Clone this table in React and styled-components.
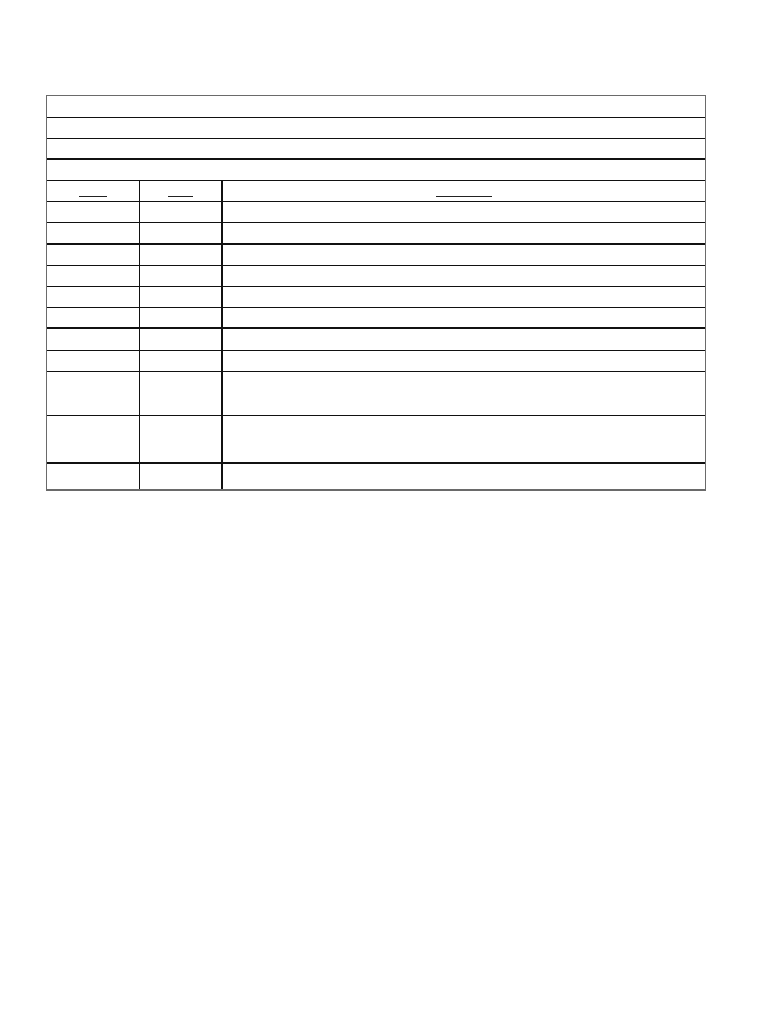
import React from "react";
import styled, { createGlobalStyle } from "styled-components";

const GlobalStyle = createGlobalStyle`
  html, body {
    margin: 0;
    padding: 0;
    background: #ffffff;
  }
  body {
    font-family: "Liberation Sans", Arial, sans-serif;
    font-size: 11px;
    color: #000;
  }
`;

const Page = styled.div`
  width: 768px;
  height: 1024px;
  padding: 95px 0 0 46px;
  box-sizing: border-box;
`;

const Sheet = styled.div`
  width: 660px;
  box-sizing: border-box;
  border: 1.5px solid #6a6a6a;
  border-bottom-width: 2px;
  display: flex;
  flex-direction: column;
`;

const BannerRow = styled.div`
  height: ${(p) => p.$h}px;
  box-sizing: border-box;
  border-bottom: ${(p) => (p.$thick ? 2 : 1)}px solid #111;
`;

const Row = styled.div`
  display: grid;
  grid-template-columns: 93px 83px 1fr;
  height: ${(p) => p.$h}px;
  box-sizing: border-box;
  border-bottom: ${(p) => (p.$last ? 0 : p.$thick ? 2 : 1)}px solid #111;
`;

const Cell = styled.div`
  display: flex;
  align-items: flex-end;
  justify-content: center;
  padding-bottom: 4px;
  box-sizing: border-box;
  border-right: ${(p) => (p.$edge ? 0 : p.$heavy ? 2 : 1)}px solid #111;
`;

const Blank = styled.span`
  display: inline-block;
  width: ${(p) => p.$w}px;
  height: 0;
  border-bottom: 1.5px solid #222;
`;

const banners = [
  { h: 22 },
  { h: 21 },
  { h: 21, thick: true },
  { h: 21 },
];

const rows = [
  { h: 21, header: true },
  { h: 21 },
  { h: 22, thick: true },
  { h: 21 },
  { h: 21 },
  { h: 21 },
  { h: 21, thick: true },
  { h: 22 },
  { h: 21 },
  { h: 44 },
  { h: 48, thick: true },
  { h: 25, last: true },
];

const App = () => (
  <>
    <GlobalStyle />
    <Page>
      <Sheet>
        {banners.map((b, i) => (
          <BannerRow key={i} $h={b.h} $thick={b.thick} />
        ))}
        {rows.map((r, i) => (
          <Row key={i} $h={r.h} $thick={r.thick} $last={r.last}>
            <Cell>{r.header && <Blank $w={28} />}</Cell>
            <Cell $heavy>{r.header && <Blank $w={25} />}</Cell>
            <Cell $edge>{r.header && <Blank $w={56} />}</Cell>
          </Row>
        ))}
      </Sheet>
    </Page>
  </>
);

export default App;
